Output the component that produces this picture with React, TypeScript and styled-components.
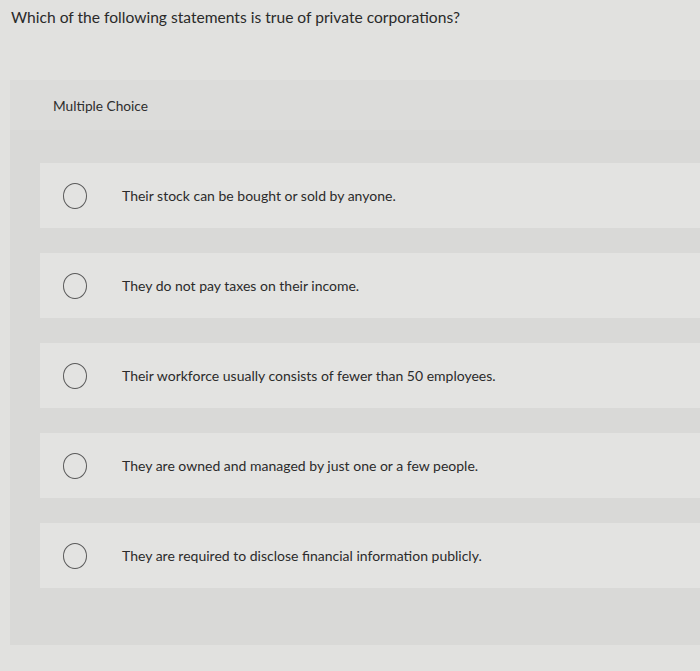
import styled, { createGlobalStyle } from 'styled-components';

const GlobalStyle = createGlobalStyle`
    html, body {
        margin: 0;
        padding: 0;
        background: #e1e1df;
        overflow: hidden;
    }
    body {
        font-family: Lato, "Open Sans", Arial, sans-serif;
        color: #2b2b2b;
    }
`;

const Page = styled.div`
    width: 700px;
    height: 671px;
    overflow: hidden;
    display: flex;
    flex-direction: column;
`;

const Question = styled.p`
    margin: 0;
    padding: 8px 0 0 11px;
    font-size: 15.6px;
    line-height: 19px;
    color: #2a2a2a;
`;

const Panel = styled.section`
    margin: 53px 0 0 10px;
    width: 720px;
    height: 565px;
    background: #d9d9d7;
    display: flex;
    flex-direction: column;
`;

const PanelHeader = styled.div`
    height: 50px;
    padding-left: 43px;
    display: flex;
    align-items: center;
    font-size: 13.7px;
    color: #2e2e2e;
    background: #dcdcda;
`;

const Options = styled.ul`
    list-style: none;
    margin: 33px 0 0 0;
    padding: 0 0 0 30px;
    display: flex;
    flex-direction: column;
    gap: 25px;
`;

const OptionRow = styled.li`
    height: 65px;
    display: flex;
    align-items: center;
    padding-left: 23px;
    background: #e3e3e1;
    font-size: 14px;
    color: #2b2b2b;
`;

const Radio = styled.span`
    width: 22px;
    height: 24px;
    border: 1.3px solid #5a5a5a;
    border-radius: 50%;
    flex: none;
    margin-right: 35px;
`;

const choices = [
    'Their stock can be bought or sold by anyone.',
    'They do not pay taxes on their income.',
    'Their workforce usually consists of fewer than 50 employees.',
    'They are owned and managed by just one or a few people.',
    'They are required to disclose financial information publicly.',
];

const App = () => (
    <>
        <GlobalStyle />
        <Page>
            <Question>Which of the following statements is true of private corporations?</Question>
            <Panel>
                <PanelHeader>Multiple Choice</PanelHeader>
                <Options>
                    {choices.map(choice => (
                        <OptionRow key={choice}>
                            <Radio />
                            <span>{choice}</span>
                        </OptionRow>
                    ))}
                </Options>
            </Panel>
        </Page>
    </>
);

export default App;
